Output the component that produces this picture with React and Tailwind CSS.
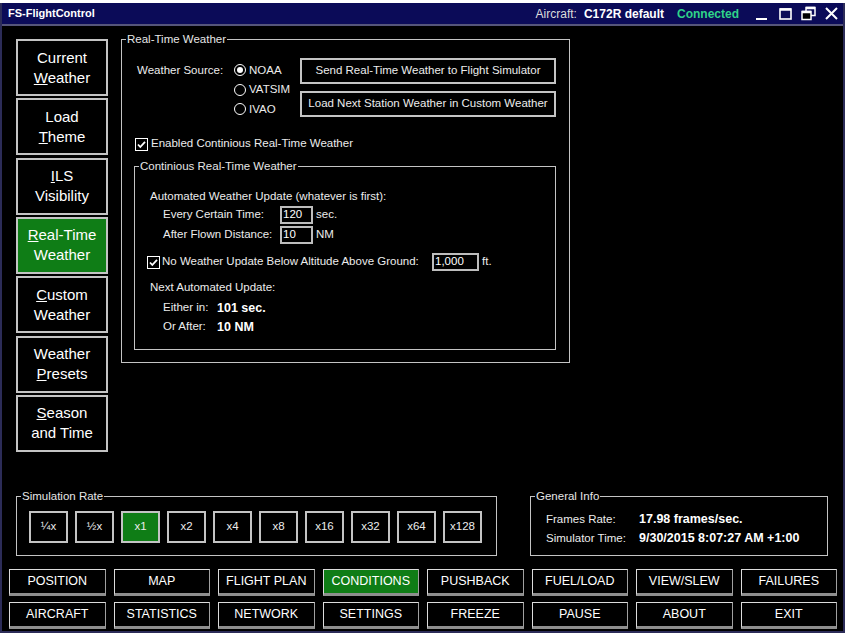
import React from "react";

const font = "font-['Liberation_Sans',Arial,sans-serif]";

function NavBtn({ children, active }) {
  return (
    <div
      className={`h-[57px] w-[92px] border-2 border-[#c4c4c4] flex flex-col items-center justify-center text-[15px] leading-[20px] text-white text-center ${
        active ? "bg-[#0f7d16]" : "bg-black"
      }`}
    >
      {children}
    </div>
  );
}

function Radio({ checked, label }) {
  return (
    <div className="h-[19.5px] flex items-center">
      <span className="w-[12px] h-[12px] rounded-full border border-white flex items-center justify-center">
        {checked && <span className="w-[6px] h-[6px] rounded-full bg-white" />}
      </span>
      <span className="ml-[3px]">{label}</span>
    </div>
  );
}

function Check() {
  return (
    <svg width="13" height="13" viewBox="0 0 13 13" className="shrink-0">
      <rect x="0.5" y="0.5" width="12" height="12" fill="black" stroke="white" />
      <path d="M3 6.5 L5.3 9 L10 3.8" fill="none" stroke="white" strokeWidth="1.8" />
    </svg>
  );
}

function Box({ value, w }) {
  return (
    <div
      className={`h-[18px] border-2 border-[#bdbdbd] bg-black text-white text-[11.5px] leading-[13px] pl-[1px] ${w}`}
    >
      {value}
    </div>
  );
}

function Group({ title, className, children }) {
  return (
    <fieldset className={`border border-[#c4c4c4] ${className}`}>
      <legend className="ml-[4px] px-[1px] text-[11.5px] leading-[13px] text-[#e6e6e6]">{title}</legend>
      {children}
    </fieldset>
  );
}

const rates = ["¼x", "½x", "x1", "x2", "x4", "x8", "x16", "x32", "x64", "x128"];
const menu = [
  ["POSITION", false],
  ["MAP", false],
  ["FLIGHT PLAN", false],
  ["CONDITIONS", true],
  ["PUSHBACK", false],
  ["FUEL/LOAD", false],
  ["VIEW/SLEW", false],
  ["FAILURES", false],
  ["AIRCRAFT", false],
  ["STATISTICS", false],
  ["NETWORK", false],
  ["SETTINGS", false],
  ["FREEZE", false],
  ["PAUSE", false],
  ["ABOUT", false],
  ["EXIT", false],
];

export default function App() {
  return (
    <div className={`w-[850px] h-[640px] bg-white overflow-hidden pt-[3px] ${font}`}>
      <div className="w-[845px] h-[630px] bg-black border-x-2 border-b-2 border-[#2c2c58] flex flex-col text-[11.5px] text-[#ececec]">
        {/* title bar */}
        <div className="h-[23px] shrink-0 bg-[#0b0b58] border-b-2 border-[#55557a] flex items-center pl-[6px] pr-[4px]">
          <span className="text-white font-bold text-[11px]">FS-FlightControl</span>
          <span className="ml-auto text-[12px] text-[#dcdcdc]">Aircraft:</span>
          <span className="ml-[7px] text-[12px] font-bold text-white">C172R default</span>
          <span className="ml-[13px] text-[12px] font-bold text-[#2fd489]">Connected</span>
          <div className="ml-[16px] flex items-center gap-[8px]">
            <svg width="15" height="15" viewBox="0 0 15 15">
              <path d="M1 13 H12" stroke="white" strokeWidth="2" />
            </svg>
            <svg width="15" height="15" viewBox="0 0 15 15">
              <rect x="2" y="3" width="11" height="10" fill="none" stroke="white" strokeWidth="1.6" />
              <path d="M2 3.5 H13" stroke="white" strokeWidth="2.5" />
            </svg>
            <svg width="15" height="15" viewBox="0 0 15 15">
              <rect x="5" y="1.5" width="9" height="8" fill="none" stroke="white" strokeWidth="1.5" />
              <path d="M5 2 H14" stroke="white" strokeWidth="2.5" />
              <rect x="1" y="5.5" width="9" height="8" fill="black" stroke="white" strokeWidth="1.5" />
              <path d="M1 6 H10" stroke="white" strokeWidth="2.5" />
            </svg>
            <svg width="15" height="15" viewBox="0 0 15 15">
              <path d="M2 2 L13 13 M13 2 L2 13" stroke="white" strokeWidth="2" />
            </svg>
          </div>
        </div>

        {/* main area */}
        <div className="flex-1 flex flex-col px-[14px] pt-[13px]">
          <div className="flex items-start">
            <div className="flex flex-col gap-[2.33px]">
              <NavBtn>
                <span>Current</span>
                <span>
                  <u>W</u>eather
                </span>
              </NavBtn>
              <NavBtn>
                <span>Load</span>
                <span>
                  <u>T</u>heme
                </span>
              </NavBtn>
              <NavBtn>
                <span>
                  <u>I</u>LS
                </span>
                <span>Visibility</span>
              </NavBtn>
              <NavBtn active>
                <span>
                  <u>R</u>eal-Time
                </span>
                <span>Weather</span>
              </NavBtn>
              <NavBtn>
                <span>
                  <u>C</u>ustom
                </span>
                <span>Weather</span>
              </NavBtn>
              <NavBtn>
                <span>Weather</span>
                <span>
                  <u>P</u>resets
                </span>
              </NavBtn>
              <NavBtn>
                <span>
                  <u>S</u>eason
                </span>
                <span>and Time</span>
              </NavBtn>
            </div>

            <Group title="Real-Time Weather" className="ml-[13px] -mt-[6.5px] w-[449px] pb-[12px]">
              <div className="flex mt-[12px]">
                <div className="ml-[15px] w-[97px] mt-[3px] h-[19.5px] flex items-center">Weather Source:</div>
                <div className="flex flex-col mt-[3px]">
                  <Radio checked label="NOAA" />
                  <Radio label="VATSIM" />
                  <Radio label="IVAO" />
                </div>
                <div className="ml-auto mr-[13px] flex flex-col gap-[7px]">
                  <div className="w-[256px] h-[26px] border-2 border-[#c4c4c4] flex items-center justify-center">
                    Send Real-Time Weather to Flight Simulator
                  </div>
                  <div className="w-[256px] h-[26px] border-2 border-[#c4c4c4] flex items-center justify-center">
                    Load Next Station Weather in Custom Weather
                  </div>
                </div>
              </div>

              <div className="mt-[17px] ml-[13px] h-[16px] flex items-center gap-[3px]">
                <Check />
                <span>Enabled Continious Real-Time Weather</span>
              </div>

              <Group title="Continious Real-Time Weather" className="mt-[8px] ml-[12px] w-[422px] pb-[14px]">
                <div className="mt-[16px] ml-[15px] h-[16px] flex items-center">
                  Automated Weather Update (whatever is first):
                </div>
                <div className="mt-[1px] ml-[28px] h-[18px] flex items-center">
                  <span className="w-[117px]">Every Certain Time:</span>
                  <Box value="120" w="w-[33px]" />
                  <span className="ml-[3px]">sec.</span>
                </div>
                <div className="mt-[2px] ml-[28px] h-[18px] flex items-center">
                  <span className="w-[117px]">After Flown Distance:</span>
                  <Box value="10" w="w-[33px]" />
                  <span className="ml-[3px]">NM</span>
                </div>
                <div className="mt-[9px] ml-[12px] h-[18px] flex items-center">
                  <Check />
                  <span className="ml-[2px] w-[270px] whitespace-nowrap">No Weather Update Below Altitude Above Ground:</span>
                  <Box value="1,000" w="w-[47px]" />
                  <span className="ml-[3px]">ft.</span>
                </div>
                <div className="mt-[9px] ml-[15px] h-[16px] flex items-center">Next Automated Update:</div>
                <div className="mt-[4px] ml-[28px] h-[16px] flex items-center">
                  <span className="w-[54px]">Either in:</span>
                  <span className="font-bold text-[12.5px] text-white">101 sec.</span>
                </div>
                <div className="mt-[3px] ml-[28px] h-[16px] flex items-center">
                  <span className="w-[54px]">Or After:</span>
                  <span className="font-bold text-[12.5px] text-white">10 NM</span>
                </div>
              </Group>
            </Group>
          </div>

          <div className="mt-auto flex">
            <Group title="Simulation Rate" className="w-[481px]">
              <div className="flex gap-[7px] ml-[12px] mt-[8px] mb-[12px]">
                {rates.map((r) => (
                  <div
                    key={r}
                    className={`w-[39px] h-[32px] border-2 border-[#c4c4c4] flex items-center justify-center ${
                      r === "x1" ? "bg-[#0f7d16]" : "bg-black"
                    }`}
                  >
                    {r}
                  </div>
                ))}
              </div>
            </Group>
            <Group title="General Info" className="ml-[33px] w-[298px]">
              <div className="ml-[15px] mt-[7px] mb-[7px]">
                <div className="h-[19px] flex items-center">
                  <span className="w-[93px]">Frames Rate:</span>
                  <span className="font-bold text-[12.5px] text-white">17.98 frames/sec.</span>
                </div>
                <div className="h-[19px] flex items-center">
                  <span className="w-[93px]">Simulator Time:</span>
                  <span className="font-bold text-[12.5px] text-white">9/30/2015 8:07:27 AM +1:00</span>
                </div>
              </div>
            </Group>
          </div>
        </div>

        <div className="grid grid-cols-8 gap-x-[8px] gap-y-[6px] mt-[13px] mb-[2px] ml-[7px] w-[828px]">
          {menu.map(([label, active]) => (
            <div
              key={label}
              className={`h-[27px] border border-[#dcdcdc] border-b-[3px] border-b-[#8e8e8e] border-r-[#a0a0a0] flex items-center justify-center text-[12.5px] text-white ${
                active ? "bg-[#0f7d16]" : "bg-black"
              }`}
            >
              {label}
            </div>
          ))}
        </div>
      </div>
    </div>
  );
}
